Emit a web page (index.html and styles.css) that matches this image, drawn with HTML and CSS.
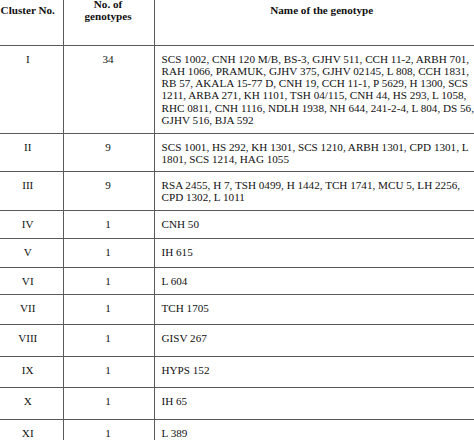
FILE: index.html
```html
<!DOCTYPE html>
<html>
<head>
<meta charset="utf-8">
<link rel="stylesheet" href="styles.css">
</head>
<body>
<table class="clusters">
  <colgroup>
    <col class="c1">
    <col class="c2">
    <col class="c3">
  </colgroup>
  <thead>
    <tr>
      <th class="cl">Cluster No.</th>
      <th class="num">No. of<br>genotypes</th>
      <th class="name">Name of the genotype</th>
    </tr>
  </thead>
  <tbody>
    <tr class="r1">
      <td class="cl">I</td><td class="num">34</td>
      <td class="name">SCS 1002, CNH 120 M/B, BS-3, GJHV 511, CCH 11-2, ARBH 701,<br>RAH 1066, PRAMUK, GJHV 375, GJHV 02145, L 808, CCH 1831,<br>RB 57, AKALA 15-77 D, CNH 19, CCH 11-1, P 5629, H 1300, SCS<br>1211, ARBA 271, KH 1101, TSH 04/115, CNH 44, HS 293, L 1058,<br>RHC 0811, CNH 1116, NDLH 1938, NH 644, 241-2-4, L 804, DS 56,<br>GJHV 516, BJA 592</td>
    </tr>
    <tr class="r2">
      <td class="cl">II</td><td class="num">9</td>
      <td class="name">SCS 1001, HS 292, KH 1301, SCS 1210, ARBH 1301, CPD 1301, L<br>1801, SCS 1214, HAG 1055</td>
    </tr>
    <tr class="r3">
      <td class="cl">III</td><td class="num">9</td>
      <td class="name">RSA 2455, H 7, TSH 0499, H 1442, TCH 1741, MCU 5, LH 2256,<br>CPD 1302, L 1011</td>
    </tr>
    <tr class="r4"><td class="cl">IV</td><td class="num">1</td><td class="name">CNH 50</td></tr>
    <tr class="r5"><td class="cl">V</td><td class="num">1</td><td class="name">IH 615</td></tr>
    <tr class="r6"><td class="cl">VI</td><td class="num">1</td><td class="name">L 604</td></tr>
    <tr class="r7"><td class="cl">VII</td><td class="num">1</td><td class="name">TCH 1705</td></tr>
    <tr class="r8"><td class="cl">VIII</td><td class="num">1</td><td class="name">GISV 267</td></tr>
    <tr class="r9"><td class="cl">IX</td><td class="num">1</td><td class="name">HYPS 152</td></tr>
    <tr class="r10"><td class="cl">X</td><td class="num">1</td><td class="name">IH 65</td></tr>
    <tr class="r11"><td class="cl">XI</td><td class="num">1</td><td class="name">L 389</td></tr>
  </tbody>
</table>
</body>
</html>
```

FILE: styles.css
```css
html, body {
  margin: 0;
  padding: 0;
  background: #ffffff;
  overflow: hidden;
}

.clusters {
  width: 474px;
  margin-top: -2px;
  table-layout: fixed;
  border-collapse: collapse;
  border-spacing: 0;
  font-family: "Liberation Serif", "Times New Roman", serif;
  font-size: 11.15px;
  line-height: 12.3px;
  color: #111111;
}

.c1 { width: 63px; }
.c2 { width: 91px; }
.c3 { width: 320px; }

.clusters th,
.clusters td {
  padding: 0;
  border: 0 solid #5a5a5a;
}

.clusters th {
  font-weight: bold;
  vertical-align: middle;
  padding-bottom: 22px;
  border-bottom-width: 1px;
}

.clusters thead tr { height: 46px; }

.clusters td {
  vertical-align: top;
  padding-top: 7px;
  border-top-width: 1px;
}

.clusters .num,
.clusters .name {
  border-left-width: 1px;
}

.clusters .cl {
  text-align: center;
  padding-right: 7px;
}

.clusters .num {
  text-align: center;
  padding-right: 1px;
}

.clusters td.name {
  text-align: left;
  padding-left: 7px;
  white-space: nowrap;
}

.clusters th.name {
  text-align: center;
  padding-left: 15px;
}

.r1 { height: 88px; }
.r2 { height: 38.5px; }
.r3 { height: 38.5px; }
.r4 { height: 28px; }
.r5 { height: 29.5px; }
.r6 { height: 27px; }
.r7 { height: 30px; }
.r8 { height: 31.5px; }
.r9 { height: 31px; }
.r10 { height: 32px; }
.r11 { height: 30px; }
```
